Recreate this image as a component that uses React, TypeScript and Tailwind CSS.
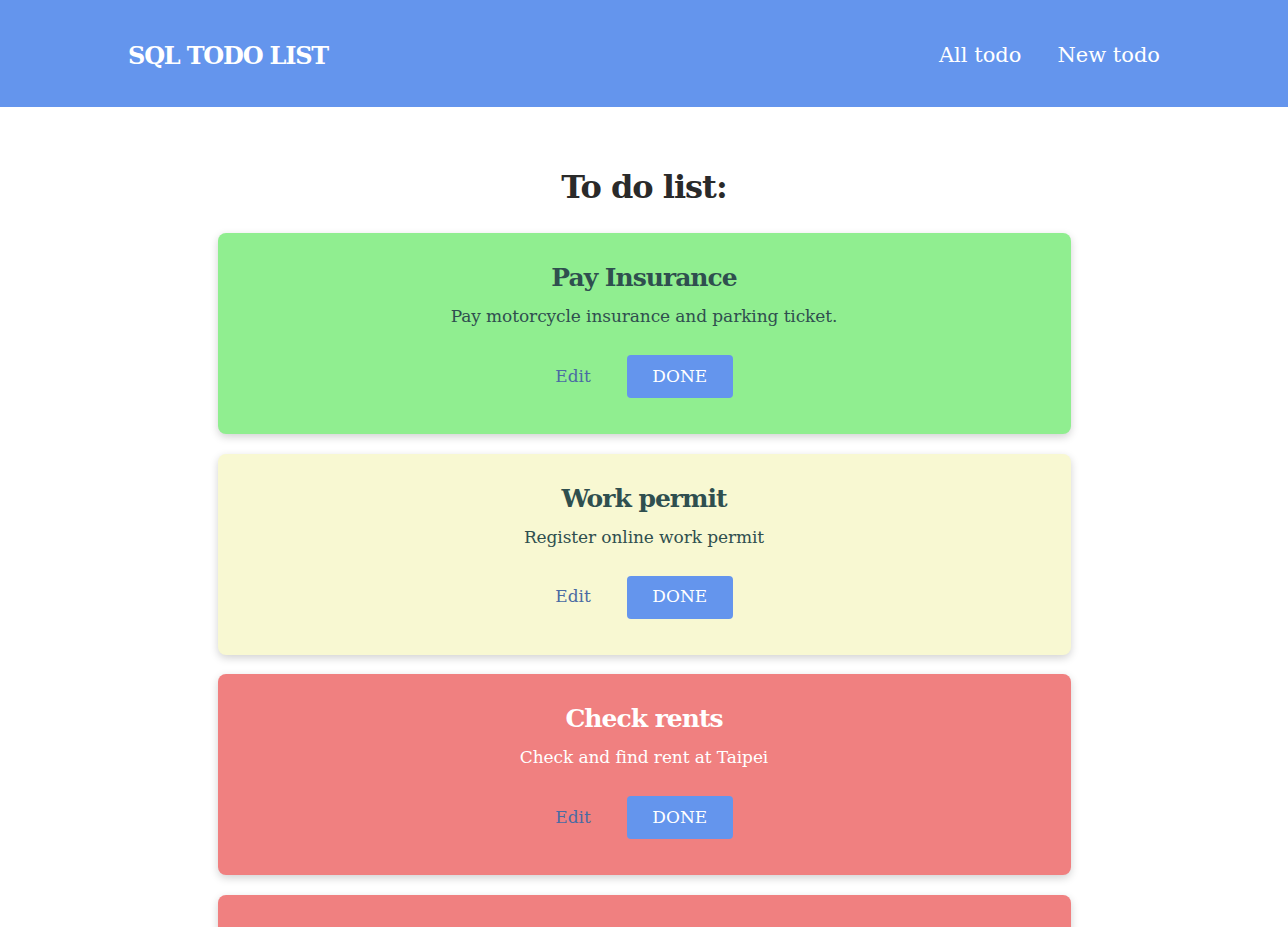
const todos = [
  { title: "Pay Insurance", body: "Pay motorcycle insurance and parking ticket.", tone: "green" },
  { title: "Work permit", body: "Register online work permit", tone: "yellow" },
  { title: "Check rents", body: "Check and find rent at Taipei", tone: "red" },
  { title: "Buy groceries", body: "Milk, eggs and bread", tone: "red" },
];

const toneClass: Record<string, string> = {
  green: "bg-[#90ee90] text-[#2f4f4f]",
  yellow: "bg-[#f8f8d2] text-[#2f4f4f]",
  red: "bg-[#f08080] text-white",
};

export default function App() {
  return (
    <div className="min-h-screen bg-white font-['DejaVu_Serif',serif]">
      <header className="flex h-[107px] items-center justify-between bg-[#6495ed] px-[128px] pt-[4px] text-white">
        <h1 className="text-[24px] font-bold tracking-[-1.2px]">SQL TODO LIST</h1>
        <nav className="flex gap-9 text-[21px]">
          <a href="#">All todo</a>
          <a href="#">New todo</a>
        </nav>
      </header>

      <main className="mx-auto w-[853px] pt-[58px]">
        <h2 className="mb-[24px] text-center text-[32px] font-bold leading-[44px] tracking-[-1px] text-[#2a2a2a]">To do list:</h2>
        <div className="flex flex-col gap-[19.5px]">
          {todos.map((t) => (
            <div
              key={t.title}
              className={`flex h-[201px] flex-col items-center rounded-lg pt-[28px] shadow-[0_3px_8px_rgba(0,0,0,0.18)] ${toneClass[t.tone]}`}
            >
              <h3 className="text-[25px] font-bold leading-[34px] tracking-[-1px]">{t.title}</h3>
              <p className="mt-[10px] text-[17px] leading-[22px] tracking-[-0.1px]">{t.body}</p>
              <div className="mt-[28px] flex items-center gap-9">
                <a href="#" className="text-[17px] text-[#4a6ba3]">Edit</a>
                <button className="h-[43px] w-[106px] rounded-[4px] bg-[#6495ed] text-[17px] text-white">DONE</button>
              </div>
            </div>
          ))}
        </div>
      </main>
    </div>
  );
}
